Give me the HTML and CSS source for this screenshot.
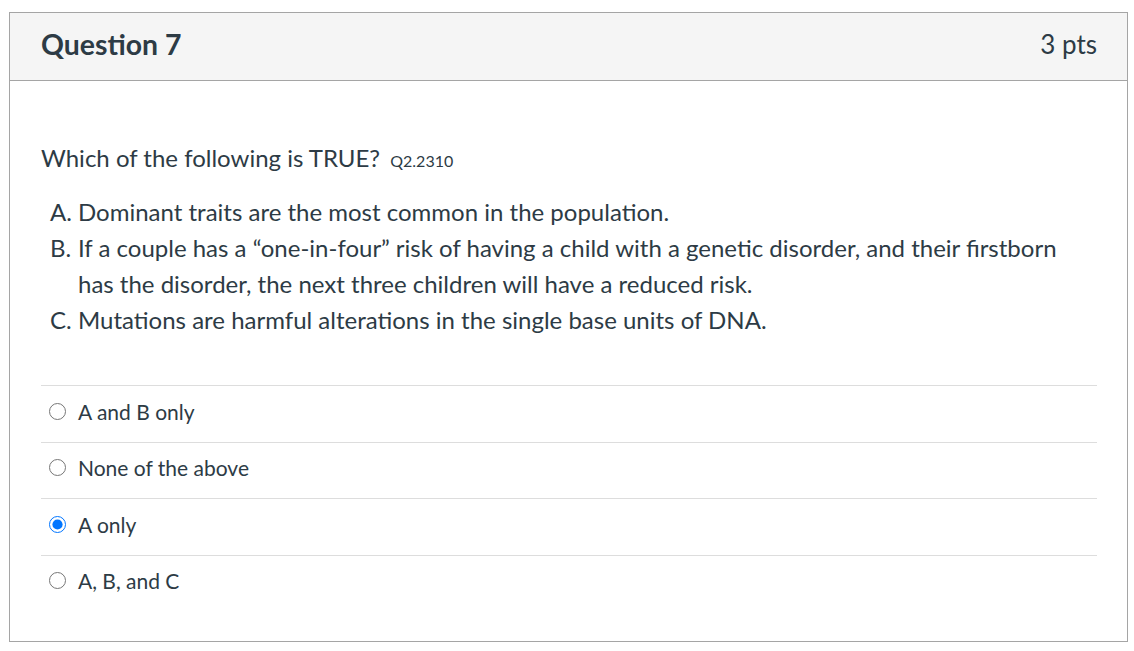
FILE: index.html
```html
<!DOCTYPE html>
<html lang="en">
<head>
<meta charset="utf-8">
<title>Question 7</title>
<link rel="stylesheet" href="styles.css">
</head>
<body>
<div class="card">
  <div class="header">
    <h2 class="title">Question 7</h2>
    <div class="pts">3 pts</div>
  </div>
  <div class="body">
    <p class="question">Which of the following is TRUE? <span class="qid">Q2.2310</span></p>
    <ol class="options">
      <li><span class="mark">A.</span><span>Dominant traits are the most common in the population.</span></li>
      <li><span class="mark">B.</span><span>If a couple has a “one-in-four” risk of having a child with a genetic disorder, and their firstborn has the disorder, the next three children will have a reduced risk.</span></li>
      <li><span class="mark">C.</span><span>Mutations are harmful alterations in the single base units of DNA.</span></li>
    </ol>
    <div class="answers">
      <label class="answer"><input type="radio" name="q7"><span>A and B only</span></label>
      <label class="answer"><input type="radio" name="q7"><span>None of the above</span></label>
      <label class="answer"><input type="radio" name="q7" checked><span>A only</span></label>
      <label class="answer"><input type="radio" name="q7"><span>A, B, and C</span></label>
    </div>
  </div>
</div>
</body>
</html>
```

FILE: styles.css
```css
html, body {
  margin: 0;
  padding: 0;
  background: #ffffff;
}
body {
  font-family: Lato, "Open Sans", "Liberation Sans", sans-serif;
  color: #2d3b45;
}
.card {
  margin: 12px 0 0 9px;
  width: 1117px;
  border: 1px solid #a5a5a5;
  background: #fff;
}
.header {
  box-sizing: border-box;
  height: 68px;
  background: #f5f5f5;
  border-bottom: 1px solid #a5a5a5;
  display: flex;
  align-items: center;
  justify-content: space-between;
  padding: 0 30px 5px 31px;
}
.title {
  margin: 0;
  font-size: 28.4px;
  font-weight: 700;
  color: #2d3b45;
  line-height: 1;
}
.pts {
  font-size: 26px;
  font-weight: 400;
  color: #2d3b45;
  line-height: 1;
}
.body {
  padding: 60px 30px 30px 31px;
}
.question {
  margin: 0;
  font-size: 24px;
  line-height: 33px;
}
.qid {
  font-size: 16px;
  margin-left: 4px;
}
.options {
  list-style: none;
  margin: 17px 0 0 0;
  padding: 0 0 0 9px;
  font-size: 24px;
  line-height: 36px;
}
.options li {
  display: flex;
}
.mark {
  flex: none;
  width: 28px;
}
.answers {
  margin-top: 47px;
}
.answer {
  box-sizing: border-box;
  height: 56.5px;
  padding-bottom: 5px;
  border-top: 1px solid #dddddd;
  display: flex;
  align-items: center;
  font-size: 21px;
  cursor: pointer;
}
.answer input {
  width: 17px;
  height: 17px;
  margin: 0 12px 0 8px;
  flex: none;
}
```
